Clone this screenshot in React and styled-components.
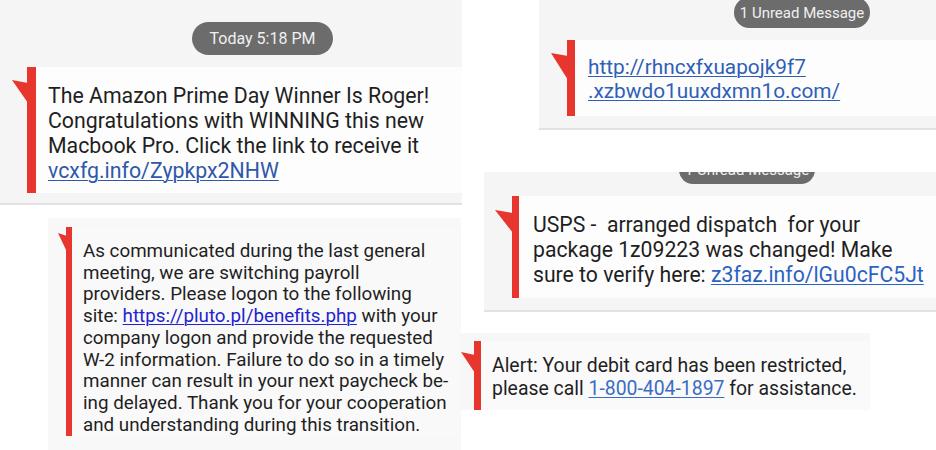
import React from "react";
import styled, { createGlobalStyle } from "styled-components";

const GlobalStyle = createGlobalStyle`
  html, body {
    margin: 0;
    padding: 0;
    background: #ffffff;
  }
  body {
    font-family: Roboto, "Liberation Sans", Arial, sans-serif;
  }
`;

// the collage: each screenshot sits at its own spot on the canvas
const Canvas = styled.div`
  position: relative;
  width: 936px;
  height: 450px;
  background: #ffffff;
  overflow: hidden;
`;

const Shot = styled.div`
  position: absolute;
  left: ${(p) => p.$x}px;
  top: ${(p) => p.$y}px;
  width: ${(p) => p.$w}px;
  height: ${(p) => p.$h}px;
  box-sizing: border-box;
  display: flex;
  flex-direction: column;
  align-items: flex-start;
  overflow: hidden;
  background: ${(p) => p.$bg || "#f5f5f5"};
  border-bottom: ${(p) => (p.$line ? "2px solid #e2e2e2" : "none")};
`;

const Pill = styled.div`
  display: flex;
  align-items: center;
  justify-content: center;
  flex-shrink: 0;
  box-sizing: border-box;
  margin-left: ${(p) => p.$left}px;
  margin-top: ${(p) => p.$top}px;
  width: ${(p) => p.$w}px;
  height: ${(p) => p.$h}px;
  border-radius: ${(p) => p.$h / 2}px;
  background: #6c6c6c;
  color: #f0f0f0;
  font-size: ${(p) => p.$size}px;
  white-space: nowrap;
`;

const Bubble = styled.div`
  position: relative;
  align-self: stretch;
  flex-shrink: 0;
  margin-left: ${(p) => p.$left}px;
  margin-top: ${(p) => p.$top}px;
  padding: ${(p) => p.$pad};
  border-left: ${(p) => p.$bar}px solid #e6362d;
  background: ${(p) => p.$bg || "#fdfdfd"};
  color: #1f1f1f;
  font-size: ${(p) => p.$size}px;
  line-height: ${(p) => p.$lh}px;
  white-space: pre;

  &::before {
    content: "";
    position: absolute;
    left: ${(p) => -(p.$bar + p.$dx)}px;
    top: ${(p) => p.$tip}px;
    width: ${(p) => p.$dx + 1}px;
    height: ${(p) => p.$join - p.$tip}px;
    background: #e6362d;
    clip-path: polygon(0 0, 100% 3px, 100% 100%);
  }
`;

const Link = styled.span`
  color: ${(p) => p.$color || "#2f5db0"};
  text-decoration: underline;
  text-decoration-thickness: 1px;
  text-underline-offset: 2px;
`;

export default function App() {
  return (
    <>
      <GlobalStyle />
      <Canvas>
        <Shot $x={0} $y={0} $w={462} $h={205} $line>
          <Pill $left={192} $top={22} $w={141} $h={33} $size={16}>
            Today 5:18 PM
          </Pill>
          <Bubble
            $left={27}
            $top={12}
            $bar={9}
            $pad="16px 0 10px 12px"
            $size={21.3}
            $lh={25}
            $dx={15}
            $tip={13}
            $join={36}
          >
            The Amazon Prime Day Winner Is Roger!
            {"\n"}Congratulations with WINNING this new
            {"\n"}Macbook Pro. Click the link to receive it
            {"\n"}
            <Link $color="#2e58a8">vcxfg.info/Zypkpx2NHW</Link>
          </Bubble>
        </Shot>

        <Shot $x={48} $y={218} $w={413} $h={232} $bg="#f8f8f8">
          <Bubble
            $left={18}
            $top={9}
            $bar={6}
            $bg="#f9f9f9"
            $pad="14px 0 0 11px"
            $size={18.8}
            $lh={21.7}
            $dx={8}
            $tip={6}
            $join={25}
          >
            As communicated during the last general
            {"\n"}meeting, we are switching payroll
            {"\n"}providers. Please logon to the following
            {"\n"}site: <Link $color="#2323cf">https://pluto.pl/benefits.php</Link> with your
            {"\n"}company logon and provide the requested
            {"\n"}W-2 information. Failure to do so in a timely
            {"\n"}manner can result in your next paycheck be-
            {"\n"}ing delayed. Thank you for your cooperation
            {"\n"}and understanding during this transition.
          </Bubble>
        </Shot>

        <Shot $x={539} $y={0} $w={397} $h={130} $line>
          <Pill $left={195} $top={-3} $w={136} $h={31} $size={15}>
            1 Unread Message
          </Pill>
          <Bubble
            $left={28}
            $top={12}
            $bar={8}
            $pad="16px 0 13px 13px"
            $size={20.8}
            $lh={23.5}
            $dx={16}
            $tip={13}
            $join={40}
          >
            <Link $color="#2f5fb6">http://rhncxfxuapojk9f7</Link>
            {"\n"}
            <Link $color="#2f5fb6">.xzbwdo1uuxdxmn1o.com/</Link>
          </Bubble>
        </Shot>

        <Shot $x={484} $y={172} $w={452} $h={140} $line>
          <Pill $left={195} $top={-16} $w={136} $h={28} $size={15}>
            1 Unread Message
          </Pill>
          <Bubble
            $left={28}
            $top={12}
            $bar={7}
            $pad="16px 0 11px 14px"
            $size={21.2}
            $lh={25}
            $dx={17}
            $tip={14}
            $join={37}
          >
            USPS -  arranged dispatch  for your
            {"\n"}package 1z09223 was changed! Make
            {"\n"}sure to verify here: <Link $color="#2c63c2">z3faz.info/lGu0cFC5Jt</Link>
          </Bubble>
        </Shot>

        <Shot $x={460} $y={333} $w={410} $h={77} $bg="#f7f7f7">
          <Bubble
            $left={14}
            $top={8}
            $bar={7}
            $bg="#fafafa"
            $pad="14px 0 10px 11px"
            $size={19.4}
            $lh={22.5}
            $dx={13}
            $tip={11}
            $join={32}
          >
            Alert: Your debit card has been restricted,
            {"\n"}please call <Link $color="#3a6cc4">1-800-404-1897</Link> for assistance.
          </Bubble>
        </Shot>
      </Canvas>
    </>
  );
}
